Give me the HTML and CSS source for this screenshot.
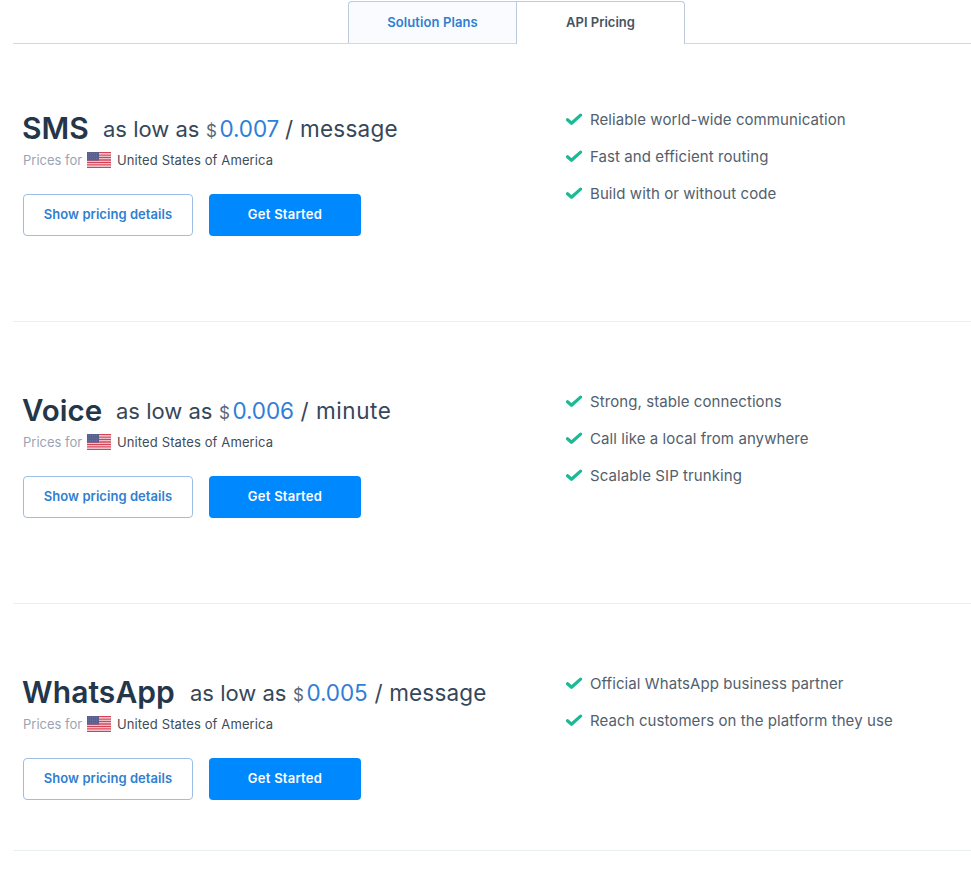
FILE: index.html
```html
<!DOCTYPE html>
<html lang="en">
<head>
<meta charset="utf-8">
<title>API Pricing</title>
<link rel="stylesheet" href="styles.css">
</head>
<body>
<svg width="0" height="0" class="defs">
  <symbol id="check" viewBox="0 0 18 14"><path d="M2.5 7.8 6.5 11.3 15.6 3.1" fill="none" stroke="#1bb994" stroke-width="3.2" stroke-linecap="round" stroke-linejoin="round"/></symbol>
  <symbol id="flag" viewBox="0 0 24 16">
    <rect width="24" height="16" rx="1" fill="#f8e8ec"/>
    <path d="M0 .6h24M0 3.1h24M0 5.5h24M0 8h24M0 10.5h24M0 12.9h24M0 15.4h24" stroke="#d44256" stroke-width="1.3"/>
    <rect width="12" height="8.6" fill="#59608f"/>
    <path d="M1 1.7h10M1 4.2h10M1 6.7h10" stroke="#777da5" stroke-width=".7" stroke-dasharray="1 1"/>
  </symbol>
</svg>
<nav class="tabs">
  <a class="tab">Solution Plans</a>
  <a class="tab active">API Pricing</a>
</nav>
<main>
  <section class="product sms">
    <div class="offer">
      <div class="headline"><h2>SMS</h2><p class="price"><span class="low">as low as</span><span class="currency">$</span><span class="amount">0.007</span><span class="unit">/ message</span></p></div>
      <p class="country"><span class="for">Prices for</span><svg class="flag"><use href="#flag"/></svg><span class="name">United States of America</span></p>
      <div class="actions"><a class="btn outline"><span>Show pricing details</span></a><a class="btn primary"><span>Get Started</span></a></div>
    </div>
    <ul class="features">
      <li><svg class="check"><use href="#check"/></svg><span>Reliable world-wide communication</span></li>
      <li><svg class="check"><use href="#check"/></svg><span>Fast and efficient routing</span></li>
      <li><svg class="check"><use href="#check"/></svg><span>Build with or without code</span></li>
    </ul>
  </section>
  <section class="product voice">
    <div class="offer">
      <div class="headline"><h2>Voice</h2><p class="price"><span class="low">as low as</span><span class="currency">$</span><span class="amount">0.006</span><span class="unit">/ minute</span></p></div>
      <p class="country"><span class="for">Prices for</span><svg class="flag"><use href="#flag"/></svg><span class="name">United States of America</span></p>
      <div class="actions"><a class="btn outline"><span>Show pricing details</span></a><a class="btn primary"><span>Get Started</span></a></div>
    </div>
    <ul class="features">
      <li><svg class="check"><use href="#check"/></svg><span>Strong, stable connections</span></li>
      <li><svg class="check"><use href="#check"/></svg><span>Call like a local from anywhere</span></li>
      <li><svg class="check"><use href="#check"/></svg><span>Scalable SIP trunking</span></li>
    </ul>
  </section>
  <section class="product whatsapp">
    <div class="offer">
      <div class="headline"><h2>WhatsApp</h2><p class="price"><span class="low">as low as</span><span class="currency">$</span><span class="amount">0.005</span><span class="unit">/ message</span></p></div>
      <p class="country"><span class="for">Prices for</span><svg class="flag"><use href="#flag"/></svg><span class="name">United States of America</span></p>
      <div class="actions"><a class="btn outline"><span>Show pricing details</span></a><a class="btn primary"><span>Get Started</span></a></div>
    </div>
    <ul class="features">
      <li><svg class="check"><use href="#check"/></svg><span>Official WhatsApp business partner</span></li>
      <li><svg class="check"><use href="#check"/></svg><span>Reach customers on the platform they use</span></li>
    </ul>
  </section>
</main>
</body>
</html>
```
FILE: styles.css
```css
* { box-sizing: border-box; }
body { margin: 0; padding: 1px 0 0 13px; font-family: Inter, "Liberation Sans", sans-serif; color: #36475a; background: #fff; height: 870px; overflow: hidden; }
h2, p, ul { margin: 0; padding: 0; }
.defs { position: absolute; }
.tabs { display: flex; height: 43px; padding-left: 335px; border-bottom: 1px solid #cddae7; }
.tab { width: 169px; height: 42px; border: 1px solid #bdcbdd; border-bottom: 0; border-radius: 4px 0 0 0; background: #f9fbff; color: #2f7fd0; font-size: 13px; font-weight: 600; letter-spacing: .1px; line-height: 41px; text-align: center; }
.tab.active { height: 43px; margin-left: -1px; width: 169px; border-radius: 0 4px 0 0; background: #fff; color: #46535f; letter-spacing: 0; }
.product { display: grid; grid-template-columns: 542px 1fr; height: 282px; padding: 72px 0 0 10px; border-bottom: 1px solid #e9eef1; }
.sms { height: 278px; padding-top: 68px; }
.whatsapp { height: 247px; }
.headline { display: flex; align-items: flex-start; height: 34px; white-space: nowrap; }
h2 { width: 81px; margin-left: -1px; font-size: 30px; font-weight: 600; color: #24364a; line-height: 33px; }
.voice h2 { width: 94px; font-size: 29.5px; }
.whatsapp h2 { width: 168px; font-size: 30px; letter-spacing: .08px; }
.price { display: flex; align-items: baseline; font-size: 22.5px; font-weight: 400; line-height: 34px; }
.low { width: 103px; font-size: 22px; }
.currency { width: 13.5px; font-size: 17px; color: #5a6878; }
.amount { width: 65.5px; letter-spacing: -.1px; color: #2f7fd8; }
.voice .amount, .whatsapp .amount { width: 68px; }
.unit { letter-spacing: .25px; }
.voice .unit { letter-spacing: .55px; }
.whatsapp .unit { letter-spacing: .15px; }
.country { display: flex; align-items: center; height: 28px; font-size: 13px; white-space: nowrap; color: #3f4c59; }
.for { width: 64px; color: #9aa4b3; }
.flag { width: 24px; height: 16px; margin-right: 6px; }
.name { letter-spacing: .12px; }
.actions { display: flex; gap: 16px; margin-top: 20px; }
.btn { display: flex; align-items: center; justify-content: center; width: 170px; height: 42px; padding-bottom: 2px; border-radius: 4px; font-size: 13px; font-weight: 600; letter-spacing: .05px; }
.outline { border: 1px solid #9bbfe4; color: #2f7fd0; }
.primary { width: 152px; background: #0088ff; color: #fff; letter-spacing: .25px; }
.features { list-style: none; margin-top: -4px; font-size: 15px; letter-spacing: .08px; color: #52606d; }
.features li { display: flex; align-items: center; height: 22px; margin-bottom: 15px; white-space: nowrap; }
.check { width: 18px; height: 14px; margin-right: 7px; }
```
